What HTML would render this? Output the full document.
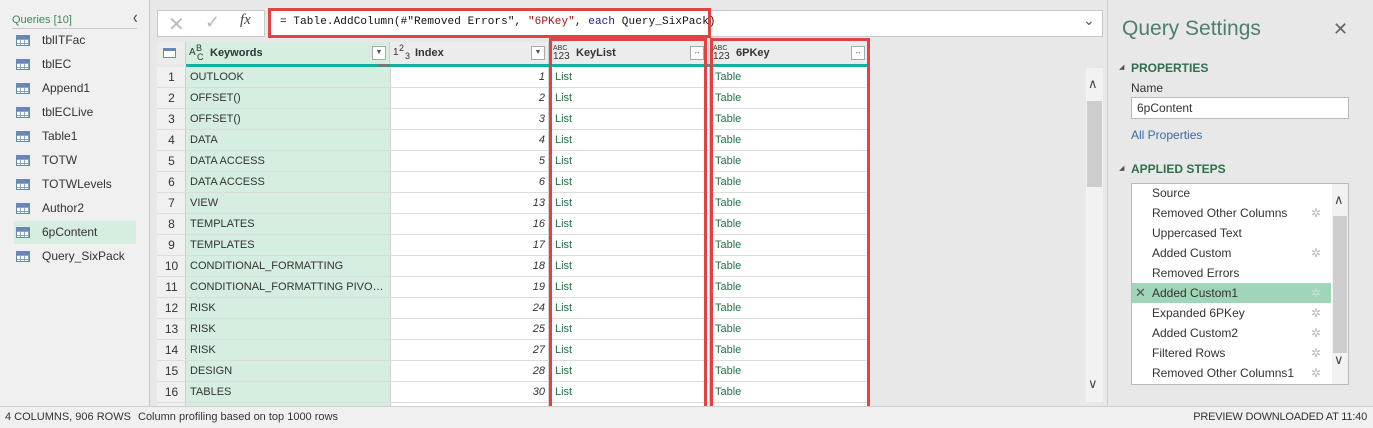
<!DOCTYPE html>
<html><head><meta charset="utf-8"><style>
*{box-sizing:border-box;margin:0;padding:0}
html,body{width:1373px;height:428px;overflow:hidden}
body{background:#e8e8e8;font-family:"Liberation Sans",sans-serif;font-size:11px;color:#333;position:relative}
.a{position:absolute;white-space:nowrap}
.left{left:0;top:0;width:150px;height:406px;background:#f0f0f0;border-right:1px solid #c8c8c8}
.q{position:absolute;left:14px;width:122px;height:23px;line-height:23px;padding-left:28px;font-size:12px;color:#333}
.q .ic{position:absolute;left:2px;top:6px;width:14px;height:11px;border:1px solid #6a87b4;background:linear-gradient(#6a87b4 0 3px,transparent 3px),repeating-linear-gradient(90deg,transparent 0 3px,#8ea4c8 3px 4px),repeating-linear-gradient(transparent 0 3px,#8ea4c8 3px 4px);background-color:#fff}
.cell{position:absolute;height:21px;line-height:21px;border-bottom:1px solid #dcdcdc;white-space:nowrap;overflow:hidden;text-overflow:ellipsis}
.hdr{position:absolute;top:42px;height:22px;line-height:22px;background:#ececec;border-right:1px solid #cfcfcf;font-weight:bold;font-size:11px;color:#333;white-space:nowrap;overflow:hidden}
.ty{position:absolute;top:0;font-weight:normal}
.dd{position:absolute;top:4px;width:14px;height:14px;border:1px solid #aaa;background:#fff;font-size:7px;line-height:12px;text-align:center;color:#555;font-weight:normal}
.red{position:absolute;border:3px solid #e04343}
.step{position:absolute;left:1152px;font-size:12px;color:#333;height:20px;line-height:20px;white-space:nowrap}
.gear{position:absolute;left:1311px;color:#bbb;font-size:12px}
</style></head><body>
<div class="a left"></div>
<div class="a" style="left:12px;top:14px;color:#3a8a5a;font-size:11px">Queries [10]</div>
<div class="a" style="left:12px;top:28px;width:125px;border-top:1px solid #c8c8c8"></div>
<div class="a" style="left:133px;top:9px;font-size:14px;color:#444;transform:scaleY(1.3)">&#x2039;</div>
<div class="q" style="top:29px"><span class="ic"></span>tblITFac</div>
<div class="q" style="top:53px"><span class="ic"></span>tblEC</div>
<div class="q" style="top:77px"><span class="ic"></span>Append1</div>
<div class="q" style="top:101px"><span class="ic"></span>tblECLive</div>
<div class="q" style="top:125px"><span class="ic"></span>Table1</div>
<div class="q" style="top:149px"><span class="ic"></span>TOTW</div>
<div class="q" style="top:173px"><span class="ic"></span>TOTWLevels</div>
<div class="q" style="top:197px"><span class="ic"></span>Author2</div>
<div class="q" style="top:221px;background:#d5eee0"><span class="ic"></span>6pContent</div>
<div class="q" style="top:245px"><span class="ic"></span>Query_SixPack</div>

<div class="a" style="left:157px;top:10px;width:108px;height:27px;background:#fff;border:1px solid #c8c8c8"></div>
<div class="a" style="left:168px;top:12px;font-size:20px;color:#bbb">&#x2715;</div>
<div class="a" style="left:205px;top:12px;font-size:18px;color:#bbb">&#x2713;</div>
<div class="a" style="left:240px;top:12px;font-size:15px;font-style:italic;font-family:'Liberation Serif',serif;color:#444">fx</div>
<div class="a" style="left:268px;top:10px;width:835px;height:27px;background:#fff;border:1px solid #c8c8c8"></div>
<div class="a" style="left:280px;top:16px;font-family:'Liberation Mono',monospace;font-size:11px;letter-spacing:0.1px;color:#111">= Table.AddColumn(#"Removed Errors", <span style="color:#a31515">"6PKey"</span>, <span style="color:#1a1aa6">each</span> Query_SixPack)</div>
<div class="a" style="left:1083px;top:12px;font-size:14px;color:#555">&#x2304;</div>
<div class="red" style="left:268px;top:8px;width:443px;height:30px"></div>

<div class="hdr" style="left:157px;width:29px;background:#ececec"><span style="position:absolute;left:6px;top:6px;width:13px;height:10px;border:1px solid #6a87b4;background:linear-gradient(#6a87b4 0 2px,#fff 2px)"></span></div>
<div class="hdr" style="left:186px;width:204px;background:#d5eee0"><span class="ty" style="left:3px;font-size:10px">A</span><span class="ty" style="left:10px;top:-5px;font-size:9px">B</span><span class="ty" style="left:11px;top:4px;font-size:9px">C</span><span style="position:absolute;left:24px">Keywords</span><span class="dd" style="left:186px">&#x25BC;</span></div>
<div class="hdr" style="left:390px;width:159px"><span class="ty" style="left:3px;font-size:10px">1</span><span class="ty" style="left:9px;top:-5px;font-size:9px">2</span><span class="ty" style="left:15px;top:3px;font-size:9px">3</span><span style="position:absolute;left:25px">Index</span><span class="dd" style="left:141px">&#x25BC;</span></div>
<div class="hdr" style="left:549px;width:160px"><span class="ty" style="left:4px;top:3px;font-size:7px;line-height:7px">ABC<br><span style="font-size:10px;line-height:10px">123</span></span><span style="position:absolute;left:27px">KeyList</span><span class="dd" style="left:141px">&#x2194;</span></div>
<div class="hdr" style="left:709px;width:161px"><span class="ty" style="left:4px;top:3px;font-size:7px;line-height:7px">ABC<br><span style="font-size:10px;line-height:10px">123</span></span><span style="position:absolute;left:27px">6PKey</span><span class="dd" style="left:142px">&#x2194;</span></div>
<div class="a" style="left:186px;top:64px;width:684px;height:3px;background:#12b0a0"></div>
<div class="a" style="left:377px;top:64px;width:13px;height:3px;background:#777"></div>

<div class="a" style="left:157px;top:67px;width:29px;height:339px;background:#f0f0f0;border-right:1px solid #cfcfcf"></div>
<div class="a" style="left:186px;top:67px;width:204px;height:339px;background:#d5eee0"></div>
<div class="a" style="left:390px;top:67px;width:480px;height:339px;background:#fff"></div>
<div class="a" style="left:390px;top:67px;width:159px;height:339px;border-left:1px solid #d0d0d0;border-right:1px solid #d0d0d0"></div>
<div class="a" style="left:709px;top:67px;width:1px;height:339px;background:#d0d0d0"></div>

<div id="rows"></div>
<script>
var k=["OUTLOOK","OFFSET()","OFFSET()","DATA","DATA ACCESS","DATA ACCESS","VIEW","TEMPLATES","TEMPLATES","CONDITIONAL_FORMATTING","CONDITIONAL_FORMATTING PIVOTTA...","RISK","RISK","RISK","DESIGN","TABLES"];
var ix=[1,2,3,4,5,6,13,16,17,18,19,24,25,27,28,30];
var h="";
for(var i=0;i<16;i++){var t=67+i*21;
h+='<div class="cell" style="left:157px;top:'+t+'px;width:29px;text-align:center;font-size:12px">'+(i+1)+'</div>';
h+='<div class="cell" style="left:186px;top:'+t+'px;width:204px;padding-left:4px;padding-right:4px">'+k[i]+'</div>';
h+='<div class="cell" style="left:390px;top:'+t+'px;width:159px;text-align:right;padding-right:4px;font-style:italic">'+ix[i]+'</div>';
h+='<div class="cell" style="left:549px;top:'+t+'px;width:160px;padding-left:6px;color:#217346">List</div>';
h+='<div class="cell" style="left:709px;top:'+t+'px;width:161px;padding-left:6px;color:#217346">Table</div>';}
document.getElementById("rows").innerHTML=h;
</script>
<div class="red" style="left:549px;top:38px;width:158px;height:375px"></div>
<div class="red" style="left:710px;top:38px;width:160px;height:376px"></div>

<div class="a" style="left:1086px;top:68px;width:17px;height:334px;background:#f2f2f2"></div>
<div class="a" style="left:1087px;top:101px;width:15px;height:86px;background:#cdcdcd"></div>
<div class="a" style="left:1088px;top:76px;font-size:13px;color:#444">&#x2227;</div>
<div class="a" style="left:1088px;top:376px;font-size:13px;color:#444">&#x2228;</div>
<div class="a" style="left:1107px;top:0;width:1px;height:406px;background:#cfcfcf"></div>

<div class="a" style="left:1122px;top:17px;font-size:21px;color:#4f7f6a">Query Settings</div>
<div class="a" style="left:1333px;top:19px;font-size:18px;color:#666">&#x2715;</div>
<div class="a" style="left:1119px;top:63px;font-size:7px;color:#555">&#x25E2;</div>
<div class="a" style="left:1131px;top:61px;font-size:12px;font-weight:bold;color:#2f6f4b">PROPERTIES</div>
<div class="a" style="left:1131px;top:81px;font-size:12px">Name</div>
<div class="a" style="left:1131px;top:97px;width:218px;height:22px;background:#fff;border:1px solid #bbb;padding-left:5px;line-height:20px;font-size:12px">6pContent</div>
<div class="a" style="left:1131px;top:128px;font-size:12px;color:#3b6aa0">All Properties</div>
<div class="a" style="left:1119px;top:164px;font-size:7px;color:#555">&#x25E2;</div>
<div class="a" style="left:1131px;top:162px;font-size:12px;font-weight:bold;color:#2f6f4b">APPLIED STEPS</div>
<div class="a" style="left:1131px;top:183px;width:218px;height:202px;background:#fff;border:1px solid #bbb"></div>
<div class="a" style="left:1132px;top:283px;width:199px;height:20px;background:#9fd6b8"></div>
<div class="a" style="left:1332px;top:184px;width:16px;height:200px;background:#f2f2f2"></div>
<div class="a" style="left:1333px;top:216px;width:14px;height:137px;background:#cdcdcd"></div>
<div class="a" style="left:1334px;top:192px;font-size:13px;color:#444">&#x2227;</div>
<div class="a" style="left:1334px;top:352px;font-size:13px;color:#444">&#x2228;</div>
<div class="step" style="top:183px">Source</div>
<div class="step" style="top:203px">Removed Other Columns</div><div class="gear" style="top:206px">&#x2732;</div>
<div class="step" style="top:223px">Uppercased Text</div>
<div class="step" style="top:243px">Added Custom</div><div class="gear" style="top:246px">&#x2732;</div>
<div class="step" style="top:263px">Removed Errors</div>
<div class="step" style="top:283px">Added Custom1</div><div class="gear" style="top:286px;color:#c4e4d2">&#x2732;</div>
<div class="a" style="left:1135px;top:285px;font-size:13px;color:#555">&#x2715;</div>
<div class="step" style="top:303px">Expanded 6PKey</div><div class="gear" style="top:306px">&#x2732;</div>
<div class="step" style="top:323px">Added Custom2</div><div class="gear" style="top:326px">&#x2732;</div>
<div class="step" style="top:343px">Filtered Rows</div><div class="gear" style="top:346px">&#x2732;</div>
<div class="step" style="top:363px">Removed Other Columns1</div><div class="gear" style="top:366px">&#x2732;</div>

<div class="a" style="left:0;top:406px;width:1373px;height:22px;background:#f0f0f0;border-top:1px solid #d0d0d0"></div>
<div class="a" style="left:5px;top:411px;font-size:11px">4 COLUMNS, 906 ROWS</div>
<div class="a" style="left:138px;top:411px;font-size:11px">Column profiling based on top 1000 rows</div>
<div class="a" style="right:6px;top:411px;font-size:11px;letter-spacing:-0.2px">PREVIEW DOWNLOADED AT 11:40</div>
</body></html>
